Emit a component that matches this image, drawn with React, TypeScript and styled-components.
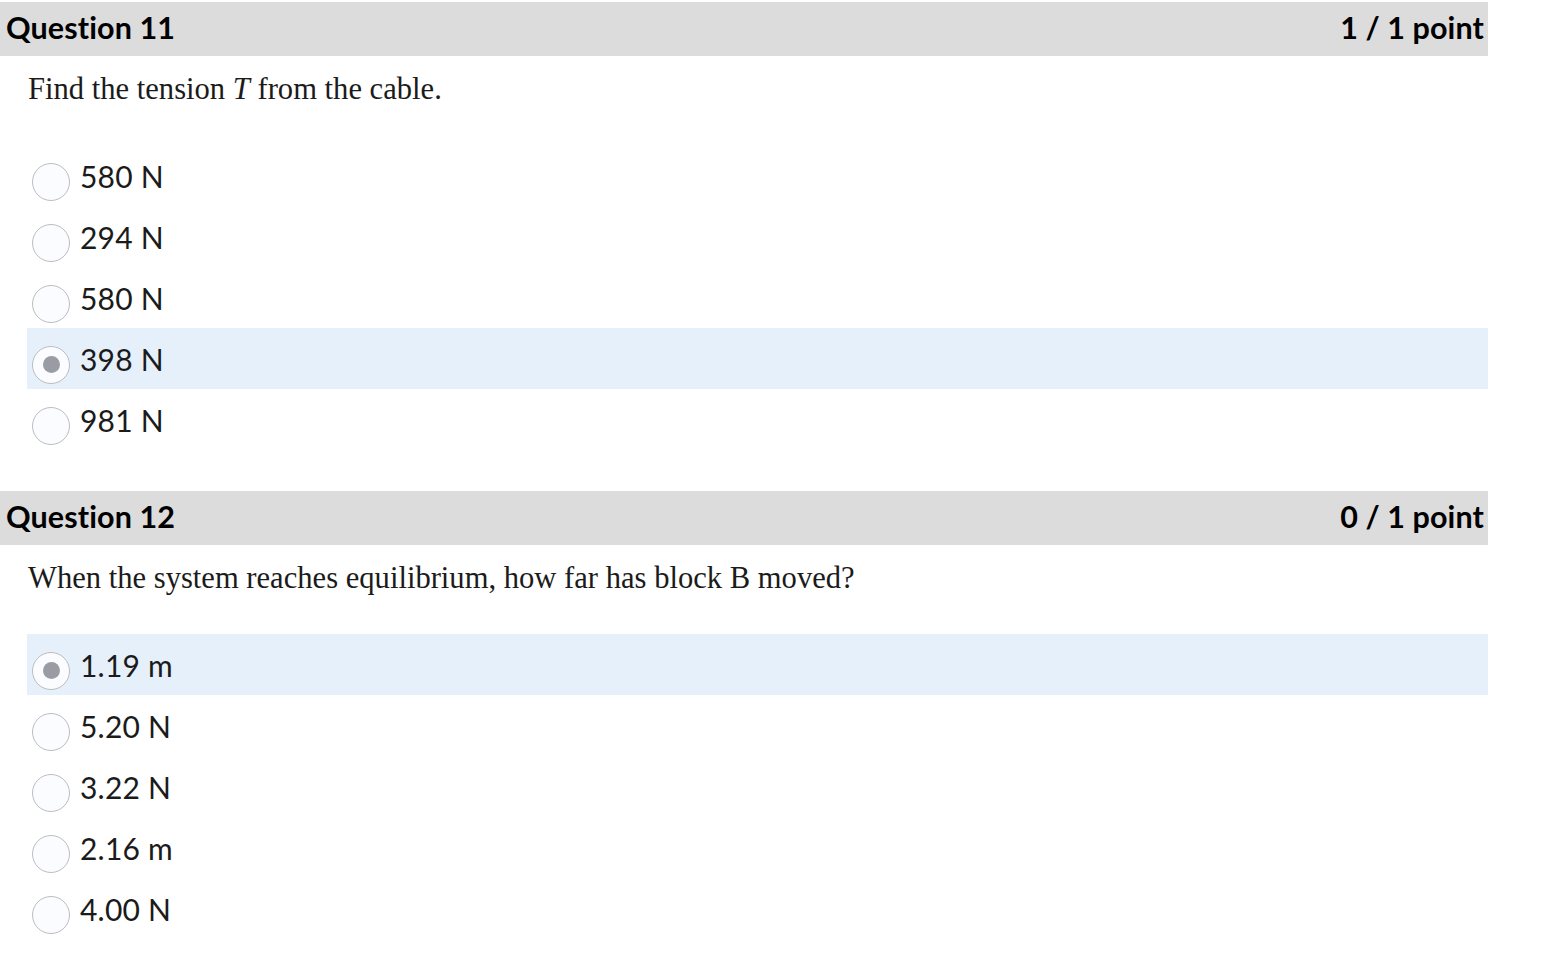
import React from "react";
import styled, { createGlobalStyle } from "styled-components";

const GlobalStyle = createGlobalStyle`
  html, body { margin: 0; padding: 0; background: #ffffff; }
  body { font-family: Lato, "Open Sans", sans-serif; color: #1b1b1b; }
`;

const Page = styled.div`
  width: 1488px;
  padding-top: 2px;
  display: flex;
  flex-direction: column;
`;

const Section = styled.section`
  display: flex;
  flex-direction: column;
  margin-bottom: 41px;
`;

const Header = styled.header`
  height: 54px;
  box-sizing: border-box;
  background: #dcdcdc;
  display: flex;
  align-items: center;
  justify-content: space-between;
  padding: 0 4px 4px 6px;
  font-family: Lato, sans-serif;
  font-weight: 700;
  font-size: 30.5px;
  letter-spacing: 0.1px;
  color: #000;
`;

const Prompt = styled.div`
  height: 89px;
  box-sizing: border-box;
  padding: 15px 0 0 28px;
  font-family: "Liberation Serif", "Times New Roman", serif;
  font-size: 30.6px;
  line-height: 36px;
  color: #1b1b1b;
`;

const Options = styled.div`
  display: flex;
  flex-direction: column;
  margin-left: 27px;
`;

const Row = styled.label<{ $selected?: boolean }>`
  height: 61px;
  display: flex;
  align-items: center;
  gap: 10px;
  padding-left: 5px;
  background: ${(p) => (p.$selected ? "#e6f0fb" : "transparent")};
  font-family: Lato, sans-serif;
  font-size: 30px;
  letter-spacing: 0.2px;
  color: #1b1b1b;
`;

const Radio = styled.span<{ $checked?: boolean }>`
  width: 38px;
  height: 38px;
  margin-top: 12px;
  box-sizing: border-box;
  border-radius: 50%;
  border: 1px solid #bdbdbd;
  background: #fafcff;
  display: flex;
  align-items: center;
  justify-content: center;
  flex-shrink: 0;
  &::after {
    content: "";
    width: 17px;
    height: 17px;
    border-radius: 50%;
    background: #9a9ca3;
    display: ${(p) => (p.$checked ? "block" : "none")};
  }
`;

type Q = { title: string; points: string; prompt: React.ReactNode; options: string[]; selected: number };

const questions: Q[] = [
  {
    title: "Question 11",
    points: "1 / 1 point",
    prompt: (
      <>
        Find the tension <i>T</i> from the cable.
      </>
    ),
    options: ["580 N", "294 N", "580 N", "398 N", "981 N"],
    selected: 3,
  },
  {
    title: "Question 12",
    points: "0 / 1 point",
    prompt: <>When the system reaches equilibrium, how far has block B moved?</>,
    options: ["1.19 m", "5.20 N", "3.22 N", "2.16 m", "4.00 N"],
    selected: 0,
  },
];

export default function App() {
  return (
    <>
      <GlobalStyle />
      <Page>
        {questions.map((q) => (
          <Section key={q.title}>
            <Header>
              <span>{q.title}</span>
              <span>{q.points}</span>
            </Header>
            <Prompt>{q.prompt}</Prompt>
            <Options>
              {q.options.map((o, i) => (
                <Row key={i} $selected={i === q.selected}>
                  <Radio $checked={i === q.selected} />
                  <span>{o}</span>
                </Row>
              ))}
            </Options>
          </Section>
        ))}
      </Page>
    </>
  );
}
